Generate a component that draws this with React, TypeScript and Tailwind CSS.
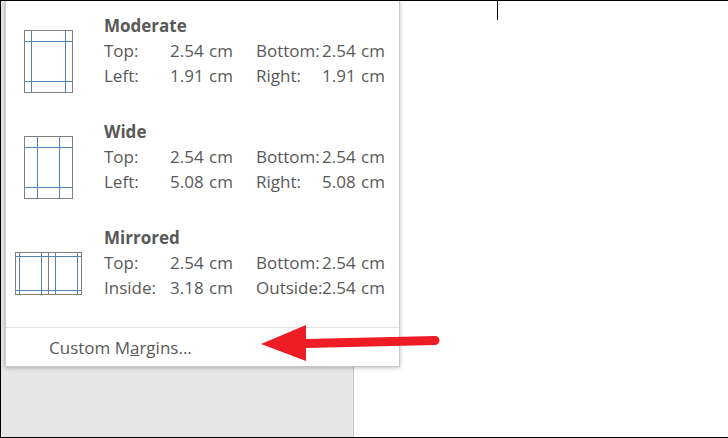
import React from 'react';

const margins = [
  { name: 'Moderate', a: 'Top:', av: '2.54 cm', b: 'Bottom:', bv: '2.54 cm', c: 'Left:', cv: '1.91 cm', d: 'Right:', dv: '1.91 cm' },
  { name: 'Wide', a: 'Top:', av: '2.54 cm', b: 'Bottom:', bv: '2.54 cm', c: 'Left:', cv: '5.08 cm', d: 'Right:', dv: '5.08 cm' },
  { name: 'Mirrored', a: 'Top:', av: '2.54 cm', b: 'Bottom:', bv: '2.54 cm', c: 'Inside:', cv: '3.18 cm', d: 'Outside:', dv: '2.54 cm' },
];

const Blue = '#5083b8';
const Gray = '#7f7f7f';

// page thumbnails, x/y lists are the margin guides
const PageIcon = ({ xs, ys }: { xs: number[]; ys: number[] }) => (
  <svg width="49" height="63" viewBox="0 0 49 63" className="block">
    {xs.map((x) => (
      <line key={x} x1={x + 0.5} y1="0" x2={x + 0.5} y2="63" stroke={Blue} />
    ))}
    {ys.map((y) => (
      <line key={y} x1="0" y1={y + 0.5} x2="49" y2={y + 0.5} stroke={Blue} />
    ))}
    <rect x="0.5" y="0.5" width="48" height="62" fill="none" stroke={Gray} />
  </svg>
);

const MirrorIcon = () => (
  <svg width="67" height="43" viewBox="0 0 67 43" className="block">
    {[4, 26, 40, 62].map((x) => (
      <line key={x} x1={x + 0.5} y1="0" x2={x + 0.5} y2="43" stroke={Blue} />
    ))}
    {[4, 38].map((y) => (
      <line key={y} x1="0" y1={y + 0.5} x2="67" y2={y + 0.5} stroke={Blue} />
    ))}
    <rect x="0.5" y="0.5" width="66" height="42" fill="none" stroke={Gray} />
    <line x1="33.5" y1="0" x2="33.5" y2="43" stroke={Gray} />
  </svg>
);

const App: React.FC = () => {
  return (
    <div
      className="relative flex h-[438px] w-[728px] overflow-hidden border-t border-b border-l border-black bg-white text-[17px] text-[#595959]"
      style={{ fontFamily: '"Open Sans", "Noto Sans", sans-serif' }}
    >
      {/* document background */}
      <div className="h-full w-[353px] shrink-0 border-r border-[#c6c6c6] bg-[#e6e6e6]" />
      <div className="flex-1 bg-white pl-[143px]">
        <div className="h-[19px] w-px bg-black" />
      </div>

      {/* margins menu */}
      <div className="absolute top-0 left-[4px] w-[395px] border-r border-b border-l border-[#c8c8c8] bg-white shadow-[0_1px_4px_rgba(0,0,0,0.25)]">
        <div className="pt-[12px]">
          {margins.map((m, i) => (
            <div key={m.name} className={i === 2 ? 'flex h-[102px]' : 'flex h-[106px]'}>
              <div className="flex w-[98px] shrink-0 pt-[17px]">
                {i === 0 && (
                  <div className="ml-[18px]">
                    <PageIcon xs={[7, 41]} ys={[11, 51]} />
                  </div>
                )}
                {i === 1 && (
                  <div className="ml-[18px]">
                    <PageIcon xs={[13, 35]} ys={[11, 51]} />
                  </div>
                )}
                {i === 2 && (
                  <div className="ml-[9px] pt-[10px]">
                    <MirrorIcon />
                  </div>
                )}
              </div>
              <div className="leading-[25px]">
                <div className="font-bold">{m.name}</div>
                <div className="flex whitespace-nowrap">
                  <span className="w-[60px]">{m.a}</span>
                  <span className="w-[69px] text-right [word-spacing:1px]">{m.av}</span>
                  <span className="ml-[23px] w-[64px]">{m.b}</span>
                  <span className="w-[65px] text-right [word-spacing:1px]">{m.bv}</span>
                </div>
                <div className="flex whitespace-nowrap">
                  <span className="w-[60px]">{m.c}</span>
                  <span className="w-[69px] text-right [word-spacing:1px]">{m.cv}</span>
                  <span className="ml-[23px] w-[64px]">{m.d}</span>
                  <span className="w-[65px] text-right [word-spacing:1px]">{m.dv}</span>
                </div>
              </div>
            </div>
          ))}
        </div>
        <div className="border-t border-[#e2e2e2] pt-[8px] pb-[6px] pl-[43px] leading-[24px]">
          Custom M<span className="underline">a</span>rgins...
        </div>
      </div>

      {/* red annotation arrow */}
      <svg width="190" height="46" viewBox="0 0 190 46" className="absolute top-[323px] left-[258px]">
        <path d="M2 20 L47 1 L47 15 L176 12 A4.5 4.5 0 0 1 176 21 L47 24 L47 37 Z" fill="#ee1c25" />
      </svg>
    </div>
  );
};

export default App;
